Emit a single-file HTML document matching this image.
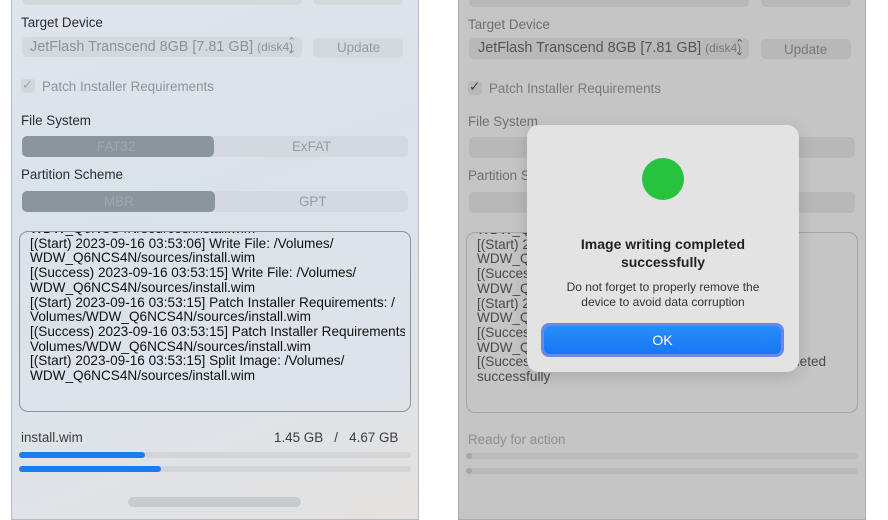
<!DOCTYPE html>
<html><head><meta charset="utf-8"><style>
*{margin:0;padding:0;box-sizing:border-box}
body{width:888px;height:500px;overflow:hidden;background:#fff;font-family:"Liberation Sans",sans-serif;position:relative}
.a{position:absolute}
.win{position:absolute;top:-10px;height:530px;border:1px solid #b8bcc0;overflow:hidden}
.lbl{position:absolute;font-size:13.4px;white-space:nowrap}
.log{position:absolute;font-size:13.6px;line-height:14.7px;white-space:pre;overflow:hidden}
</style></head><body>

<!-- LEFT WINDOW -->
<div class="win" style="left:11px;width:408px;background:linear-gradient(160deg,#dfe5ec 0%,#d9e2ea 40%,#dfe3e8 75%,#e4e1df 100%);"></div>
<div class="a" style="left:22px;top:-6px;width:280px;height:11px;background:#d3d8dd;border-radius:5px"></div>
<div class="a" style="left:313px;top:-6px;width:90px;height:11px;background:#d3d8dd;border-radius:5px"></div>
<div class="lbl" style="left:21px;top:15px;color:#2a2e33">Target Device</div>
<div class="a" style="left:22px;top:37px;width:280px;height:20px;background:#d4d9de;border-radius:5px"></div>
<div class="lbl" style="left:30px;top:39px;font-size:14.4px;color:#8c9297">JetFlash Transcend 8GB [7.81 GB] <span style="font-size:12px">(disk4)</span></div>
<div class="lbl" style="left:287px;top:38px;font-size:11px;color:#8c9297;line-height:8px">⌃<br>⌄</div>
<div class="a" style="left:313px;top:38px;width:90px;height:20px;background:#d4d9de;border-radius:5px"></div>
<div class="lbl" style="left:337px;top:40px;color:#959ba0">Update</div>
<div class="a" style="left:21px;top:79px;width:14px;height:14px;background:#d2d7dc;border-radius:3px"></div>
<div class="lbl" style="left:22px;top:77px;font-size:13px;color:#a0a6ab">✓</div>
<div class="lbl" style="left:42px;top:79px;color:#8d9398">Patch Installer Requirements</div>
<div class="lbl" style="left:21px;top:113px;color:#2a2e33">File System</div>
<div class="a" style="left:22px;top:136px;width:386px;height:21px;background:#d3d9df;border-radius:5px"></div>
<div class="a" style="left:22px;top:136px;width:192px;height:21px;background:#8a959c;border-radius:5px"></div>
<div class="lbl" style="left:97px;top:139px;color:#9ea7ad">FAT32</div>
<div class="lbl" style="left:292px;top:139px;color:#959ba0">ExFAT</div>
<div class="lbl" style="left:21px;top:167px;color:#2a2e33">Partition Scheme</div>
<div class="a" style="left:22px;top:191px;width:386px;height:21px;background:#d3d9df;border-radius:5px"></div>
<div class="a" style="left:22px;top:191px;width:193px;height:21px;background:#8a959c;border-radius:5px"></div>
<div class="lbl" style="left:104px;top:194px;color:#9ea7ad">MBR</div>
<div class="lbl" style="left:299px;top:194px;color:#959ba0">GPT</div>
<div class="a" style="left:19px;top:231px;width:392px;height:181px;border:1px solid #8d9297;border-radius:9px;background:rgba(220,228,235,.5)"></div>
<div class="log" style="left:30px;top:232px;width:375px;height:170px;color:#111">
<div style="position:absolute;top:-10px;left:0">WDW_Q6NCS4N/sources/install.wim
[(Start) 2023-09-16 03:53:06] Write File: /Volumes/
WDW_Q6NCS4N/sources/install.wim
[(Success) 2023-09-16 03:53:15] Write File: /Volumes/
WDW_Q6NCS4N/sources/install.wim
[(Start) 2023-09-16 03:53:15] Patch Installer Requirements: /
Volumes/WDW_Q6NCS4N/sources/install.wim
[(Success) 2023-09-16 03:53:15] Patch Installer Requirements: /
Volumes/WDW_Q6NCS4N/sources/install.wim
[(Start) 2023-09-16 03:53:15] Split Image: /Volumes/
WDW_Q6NCS4N/sources/install.wim</div></div>
<div class="lbl" style="left:21px;top:430px;color:#3a3e42">install.wim</div>
<div class="lbl" style="left:274px;top:430px;color:#3a3e42">1.45 GB &nbsp;&nbsp;/ &nbsp;&nbsp;4.67 GB</div>
<div class="a" style="left:19px;top:452px;width:392px;height:6px;background:#d2d5d8;border-radius:3px"></div>
<div class="a" style="left:19px;top:452px;width:126px;height:6px;background:#1b7cf0;border-radius:3px"></div>
<div class="a" style="left:19px;top:466px;width:392px;height:6px;background:#d2d5d8;border-radius:3px"></div>
<div class="a" style="left:19px;top:466px;width:142px;height:6px;background:#1b7cf0;border-radius:3px"></div>
<div class="a" style="left:128px;top:497px;width:173px;height:10px;background:#c8cbce;border-radius:5px"></div>

<!-- RIGHT WINDOW -->
<div class="win" style="left:458px;width:408px;background:#c5c5c5;border-color:#aaa"></div>
<div class="a" style="left:469px;top:-6px;width:280px;height:13px;background:#b8b8b8;border-radius:5px"></div>
<div class="a" style="left:761px;top:-6px;width:90px;height:13px;background:#b8b8b8;border-radius:5px"></div>
<div class="lbl" style="left:468px;top:17px;color:#6e6e6e">Target Device</div>
<div class="a" style="left:469px;top:38px;width:280px;height:21px;background:#b8b8b8;border-radius:5px"></div>
<div class="lbl" style="left:478px;top:40px;font-size:14.4px;color:#555">JetFlash Transcend 8GB [7.81 GB] <span style="font-size:12px;color:#777">(disk4)</span></div>
<div class="lbl" style="left:735px;top:40px;font-size:11px;color:#555;line-height:8px">⌃<br>⌄</div>
<div class="a" style="left:761px;top:39px;width:90px;height:20px;background:#b8b8b8;border-radius:5px"></div>
<div class="lbl" style="left:784px;top:42px;color:#777">Update</div>
<div class="a" style="left:468px;top:81px;width:14px;height:14px;background:#b8b8b8;border-radius:3px"></div>
<div class="lbl" style="left:469px;top:79px;color:#444">✓</div>
<div class="lbl" style="left:489px;top:81px;color:#7a7a7a">Patch Installer Requirements</div>
<div class="lbl" style="left:468px;top:114px;color:#6e6e6e">File System</div>
<div class="a" style="left:469px;top:137px;width:386px;height:21px;background:#b8b8b8;border-radius:5px"></div>
<div class="lbl" style="left:468px;top:168px;color:#6e6e6e">Partition Scheme</div>
<div class="a" style="left:469px;top:192px;width:386px;height:21px;background:#b8b8b8;border-radius:5px"></div>
<div class="a" style="left:466px;top:232px;width:392px;height:181px;border:1px solid #a4a4a4;border-radius:9px"></div>
<div class="log" style="left:477px;top:233px;width:375px;height:165px;color:#4a4a4a">
<div style="position:absolute;top:-10px;left:0">WDW_Q6NCS4N/sources
[(Start) 2023-09-16 03:53:15]
WDW_Q6NCS4N/sources
[(Success) 2023-09-16 03:53:20]
WDW_Q6NCS4N/sources
[(Start) 2023-09-16 03:53:20]
WDW_Q6NCS4N/sources
[(Success) 2023-09-16 03:54:40]
WDW_Q6NCS4N/sources
[(Success) 2023-09-16 03:54:40] Image writing completed
successfully</div></div>
<div class="lbl" style="left:468px;top:432px;color:#8e8e8e">Ready for action</div>
<div class="a" style="left:466px;top:453px;width:392px;height:6px;background:#bababa;border-radius:3px"></div>
<div class="a" style="left:466px;top:453px;width:6px;height:6px;background:#a6a6a6;border-radius:3px"></div>
<div class="a" style="left:466px;top:468px;width:392px;height:6px;background:#bababa;border-radius:3px"></div>
<div class="a" style="left:466px;top:468px;width:6px;height:6px;background:#a6a6a6;border-radius:3px"></div>

<!-- DIALOG -->
<div class="a" style="left:527px;top:125px;width:272px;height:247px;background:#e3e3e3;border-radius:12px;box-shadow:0 4px 16px rgba(0,0,0,.15)"></div>
<div class="a" style="left:642px;top:158px;width:42px;height:42px;background:#26c33f;border-radius:50%"></div>
<div class="a" style="left:527px;top:235px;width:272px;text-align:center;font-size:14px;font-weight:bold;line-height:18px;color:#222">Image writing completed<br>successfully</div>
<div class="a" style="left:527px;top:280px;width:272px;text-align:center;font-size:12px;line-height:15px;color:#333">Do not forget to properly remove the<br>device to avoid data corruption</div>
<div class="a" style="left:541px;top:323px;width:243px;height:34px;border-radius:8px;background:#6b86ea"></div>
<div class="a" style="left:544px;top:326px;width:237px;height:28px;border-radius:6px;background:linear-gradient(#2a8dfb,#1677f5);color:#fff;text-align:center;font-size:14px;line-height:28px">OK</div>
</body></html>
